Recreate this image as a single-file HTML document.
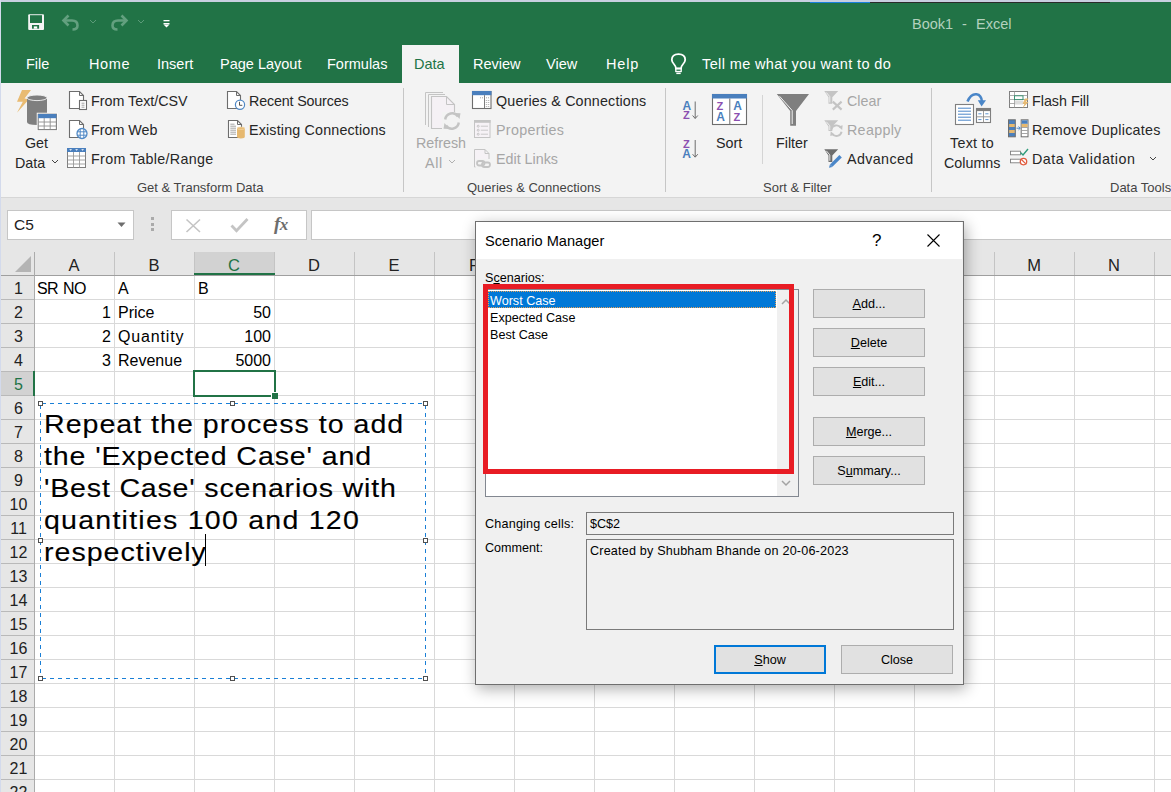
<!DOCTYPE html>
<html><head><meta charset="utf-8">
<style>
*{box-sizing:border-box;margin:0;padding:0}
html,body{width:1171px;height:792px;overflow:hidden;background:#fff;font-family:"Liberation Sans",sans-serif;}
body{position:relative}
.a{position:absolute;white-space:nowrap}
.t{position:absolute;white-space:nowrap;line-height:1}
#topstrip{left:0;top:0;width:1171px;height:2px;background:#c8cfe0}
#leftstrip{left:0;top:0;width:1px;height:792px;background:#d3daec}
#green{left:1px;top:2px;width:1170px;height:81px;background:#217346}
.tab{color:#fff;font-size:14.5px;top:57px}
#ribbon{left:1px;top:83px;width:1170px;height:114px;background:#f3f3f3}
.rb{color:#262626;font-size:14.3px}
.rbd{color:#a6a6a6;font-size:14.3px}
.grp{color:#444;font-size:13px;top:181px}
.sep{position:absolute;width:1px;background:#d4d4d4}
#fbar{left:1px;top:197px;width:1170px;height:55px;background:#e6e6e6;border-top:1px solid #d6d6d6}
#colhdr{left:1px;top:252px;width:1170px;height:24px;background:#e6e6e6;border-bottom:1px solid #9f9f9f}
#rowhdr{left:1px;top:276px;width:34px;height:516px;background:#e6e6e6;border-right:1px solid #9f9f9f}
#cells{left:35px;top:276px;width:1136px;height:516px;
 background-image:repeating-linear-gradient(to right,transparent 0,transparent 79px,#d9d9d9 79px,#d9d9d9 80px),
 repeating-linear-gradient(to bottom,transparent 0,transparent 23px,#d9d9d9 23px,#d9d9d9 24px);}
.ch{font-size:16.5px;color:#222;top:257px;text-align:center;width:80px}
.rh{font-size:16px;color:#222;left:2px;width:33px;text-align:center}
.cell{font-size:16px;color:#000}
.dl{font-size:12.6px;color:#000}
.btn{left:813px;width:112px;height:29px;background:#e1e1e1;border:1px solid #adadad}
.tb{font-size:26px;color:#000;letter-spacing:0.9px;transform:scaleX(1.1);transform-origin:0 0;-webkit-text-stroke:0.12px #000}
</style></head><body>
<div class="a" id="topstrip"></div>
<div class="a" id="green"></div>
<div class="a" style="left:810px;top:2px;width:60px;height:1px;background:#1a7fdc"></div>
<div class="a" style="left:870px;top:2px;width:240px;height:1px;background:#2a2a2a"></div>
<div class="a" id="leftstrip"></div>

<!-- title -->
<div class="t" style="left:912px;top:17px;font-size:14.5px;color:#b3d1be">Book1</div><div class="t" style="left:962px;top:17px;font-size:14.5px;color:#b3d1be">-</div><div class="t" style="left:976px;top:17px;font-size:14.5px;color:#b3d1be">Excel</div>

<!-- tabs -->
<div class="t tab" style="left:26px">File</div>
<div class="t tab" style="letter-spacing:0.6px;left:89px">Home</div>
<div class="t tab" style="left:157px">Insert</div>
<div class="t tab" style="left:220px">Page Layout</div>
<div class="t tab" style="left:327px">Formulas</div>
<div class="a" style="left:402px;top:45px;width:57px;height:38px;background:#f3f3f3"></div>
<div class="t tab" style="left:414px;color:#217346">Data</div>
<div class="t tab" style="left:473px">Review</div>
<div class="t tab" style="left:546px">View</div>
<div class="t tab" style="letter-spacing:0.8px;left:606px">Help</div>
<div class="t tab" style="letter-spacing:0.38px;left:702px">Tell me what you want to do</div>

<!-- ribbon -->
<div class="a" id="ribbon"></div>
<div class="t rb" style="left:25px;top:136px">Get</div>
<div class="t rb" style="left:15px;top:156px">Data</div>
<div class="t rb" style="left:91px;top:94px">From Text/CSV</div>
<div class="t rb" style="left:91px;top:123px">From Web</div>
<div class="t rb" style="letter-spacing:0.32px;left:91px;top:152px">From Table/Range</div>
<div class="t rb" style="letter-spacing:-0.16px;left:249px;top:94px">Recent Sources</div>
<div class="t rb" style="letter-spacing:0.17px;left:249px;top:123px">Existing Connections</div>
<div class="t grp" style="left:137px">Get &amp; Transform Data</div>

<div class="t rbd" style="left:416px;top:136px">Refresh</div>
<div class="t rbd" style="letter-spacing:0.7px;left:425px;top:156px">All</div>
<div class="t rb" style="letter-spacing:0.16px;left:496px;top:94px">Queries &amp; Connections</div>
<div class="t rbd" style="letter-spacing:0.3px;left:496px;top:123px">Properties</div>
<div class="t rbd" style="left:496px;top:152px">Edit Links</div>
<div class="t grp" style="left:467px">Queries &amp; Connections</div>

<div class="t rb" style="left:716px;top:136px">Sort</div>
<div class="t rb" style="left:776px;top:136px">Filter</div>
<div class="t rbd" style="left:847px;top:94px">Clear</div>
<div class="t rbd" style="letter-spacing:0.3px;left:847px;top:123px">Reapply</div>
<div class="t rb" style="letter-spacing:0.37px;left:847px;top:152px">Advanced</div>
<div class="t grp" style="left:763px">Sort &amp; Filter</div>

<div class="t rb" style="letter-spacing:0.28px;left:950px;top:136px">Text to</div>
<div class="t rb" style="left:944px;top:156px">Columns</div>
<div class="t rb" style="left:1032px;top:94px">Flash Fill</div>
<div class="t rb" style="letter-spacing:0.28px;left:1032px;top:123px">Remove Duplicates</div>
<div class="t rb" style="letter-spacing:0.5px;left:1032px;top:152px">Data Validation</div>
<div class="t grp" style="left:1110px">Data Tools</div>

<div class="sep" style="left:403px;top:88px;height:104px;background:#c6c6c6"></div>
<div class="sep" style="left:665px;top:88px;height:104px;background:#c6c6c6"></div>
<div class="sep" style="left:931px;top:88px;height:104px;background:#c6c6c6"></div>

<!-- formula bar -->
<div class="a" id="fbar"></div>
<div class="a" style="left:7px;top:210px;width:127px;height:30px;background:#fff;border:1px solid #c6c6c6"></div>
<div class="t" style="left:14px;top:217px;font-size:15.5px;color:#222">C5</div>
<div class="a" style="left:171px;top:210px;width:136px;height:30px;background:#fff;border:1px solid #c6c6c6"></div>
<div class="a" style="left:311px;top:210px;width:870px;height:30px;background:#fff;border:1px solid #c6c6c6"></div>

<!-- QAT -->
<svg class="a" style="left:28px;top:14px" width="17" height="17"><path d="M0.2 1.2 Q0.2 0.2 1.2 0.2 H15 Q16 0.2 16 1.2 V14.9 Q16 15.9 15 15.9 H1.2 Q0.2 15.9 0.2 14.9 Z" fill="#f4f4f4"/><rect x="2" y="1.2" width="12" height="7.8" fill="#217346"/><rect x="4" y="11" width="7.1" height="3.7" fill="#217346"/><rect x="5.8" y="12.4" width="3.4" height="2.3" fill="#fff"/></svg>
<svg class="a" style="left:61px;top:14px" width="20" height="17"><path d="M3 6.5 H11 Q16.5 6.5 16.5 11.5 Q16.5 15.5 11.5 15.5" stroke="#63a07f" stroke-width="2.6" fill="none"/><path d="M7.5 1.5 L2.5 6.5 L7.5 11.5" stroke="#63a07f" stroke-width="2.6" fill="none"/></svg>
<svg class="a" style="left:89px;top:19px" width="8" height="5"><path d="M1 1 L4 4 L7 1" stroke="#5c9b79" stroke-width="1" fill="none"/></svg>
<svg class="a" style="left:109px;top:14px" width="20" height="17"><path d="M17 6.5 H9 Q3.5 6.5 3.5 11.5 Q3.5 15.5 8.5 15.5" stroke="#63a07f" stroke-width="2.6" fill="none"/><path d="M12.5 1.5 L17.5 6.5 L12.5 11.5" stroke="#63a07f" stroke-width="2.6" fill="none"/></svg>
<svg class="a" style="left:137px;top:19px" width="8" height="5"><path d="M1 1 L4 4 L7 1" stroke="#5c9b79" stroke-width="1" fill="none"/></svg>
<svg class="a" style="left:163px;top:19px" width="8" height="9"><rect x="0.5" y="1" width="6" height="1.3" fill="#fff"/><rect x="0.5" y="4" width="6" height="1.3" fill="#fff"/><path d="M0.5 5.5 H6.5 L3.5 8.5 Z" fill="#fff"/></svg>
<!-- bulb -->
<svg class="a" style="left:669px;top:52px" width="20" height="24"><path d="M7 16.5 Q7 14.5 5.2 12.5 Q2.8 10 2.8 7.8 Q2.8 2.2 9.5 2.2 Q16.2 2.2 16.2 7.8 Q16.2 10 13.8 12.5 Q12 14.5 12 16.5 Z" stroke="#fff" stroke-width="1.8" fill="none"/><rect x="6.8" y="16.5" width="5.4" height="3" stroke="#fff" stroke-width="1.3" fill="none"/><rect x="7.3" y="20.6" width="4.4" height="1.5" fill="#fff"/></svg>
<!-- Get data -->
<svg class="a" style="left:10px;top:85px" width="50" height="48">
<path d="M12 5 L21 5 L14.5 13.5 L19 14.2 L7 27.8 L12.8 16.8 L7 16.8 Z" fill="#e9bb72"/>
<path d="M17 12.8 V37 Q17 40 27 40 Q37 40 37 37 V12.8 Z" fill="#7f7f7f"/>
<ellipse cx="27" cy="12.8" rx="10" ry="2.8" fill="#7f7f7f" stroke="#f3f3f3" stroke-width="0.9"/>
<rect x="27.5" y="28.5" width="19.5" height="16.5" fill="#fff" stroke="#fff" stroke-width="1.5"/>
<rect x="28.2" y="29.2" width="18.2" height="15.4" fill="#fff" stroke="#7f7f7f" stroke-width="1.1"/>
<rect x="28.2" y="29" width="18.2" height="4.2" fill="#4a7fbd"/>
<path d="M34.2 33 V44.5 M40.2 33 V44.5 M28.5 37 H46 M28.5 41 H46" stroke="#8f8f8f" stroke-width="0.9"/>
</svg>
<!-- From Text/CSV -->
<svg class="a" style="left:64px;top:88px" width="28" height="82">
<path d="M5.5 3.5 H15.5 L19.5 7.5 V20.5 H5.5 Z" stroke="#6d6d6d" stroke-width="1.1" fill="#fff"/><path d="M15.5 3.5 V7.5 H19.5" stroke="#6d6d6d" stroke-width="1" fill="none"/>
<rect x="15.5" y="12.5" width="7" height="9" fill="#fff" stroke="#6d6d6d" stroke-width="1.1"/>
<path d="M17.5 15.2 H20.5 M17.5 17.2 H20.5 M17.5 19.2 H20.5" stroke="#7a7a7a" stroke-width="0.7"/>
<path d="M5.5 32.5 H15.5 L19.5 36.5 V49.5 H5.5 Z" stroke="#6d6d6d" stroke-width="1.1" fill="#fff"/><path d="M15.5 32.5 V36.5 H19.5" stroke="#6d6d6d" stroke-width="1" fill="none"/>
<circle cx="18" cy="45.5" r="5" fill="#fff" stroke="#5089c6" stroke-width="1.3"/>
<path d="M13.5 43.8 H22.5 M13.5 47.2 H22.5 M16.2 41 V50 M19.8 41 V50" stroke="#5089c6" stroke-width="1"/>
<rect x="3.5" y="60.5" width="18" height="19" fill="#fff" stroke="#7f7f7f" stroke-width="1"/>
<rect x="3" y="60" width="19" height="4" fill="#4a7fbd"/>
<path d="M9.5 64 V79.5 M15.5 64 V79.5 M3.5 68 H21.5 M3.5 72 H21.5 M3.5 76 H21.5" stroke="#9a9a9a" stroke-width="0.9"/>
<path d="M5.2 61.2 H8 L6.6 62.8 Z M11.2 61.2 H14 L12.6 62.8 Z M17.2 61.2 H20 L18.6 62.8 Z" fill="#fff"/>
</svg>
<!-- Recent sources / existing connections -->
<svg class="a" style="left:222px;top:88px" width="28" height="56">
<path d="M5.5 3.5 H14.5 L18.5 7.5 V20.5 H5.5 Z" stroke="#6d6d6d" stroke-width="1.1" fill="#fff"/><path d="M14.5 3.5 V7.5 H18.5" stroke="#6d6d6d" stroke-width="1" fill="none"/>
<circle cx="18" cy="16.7" r="4.6" fill="#fff" stroke="#4f88c6" stroke-width="1.2"/>
<path d="M17.5 13.8 V17.3 H20.3" stroke="#555" stroke-width="1" fill="none"/>
<path d="M6.5 32.5 H15.5 L19.5 36.5 V49.5 H6.5 Z" stroke="#6d6d6d" stroke-width="1.1" fill="#fff"/><path d="M15.5 32.5 V36.5 H19.5" stroke="#6d6d6d" stroke-width="1" fill="none"/>
<path d="M8.3 36.2 H12.5 M8.3 38.2 H14 M8.3 40.2 H14 M8.3 42.2 H14 M8.3 44.2 H14 M8.3 46.2 H14" stroke="#8f8f8f" stroke-width="0.8"/>
<path d="M15 40.2 V48.8 Q15 50.5 18.9 50.5 Q22.8 50.5 22.8 48.8 V40.2 Z" fill="#e6b86f"/>
<ellipse cx="18.9" cy="40.2" rx="3.9" ry="1.2" fill="#e6b86f" stroke="#f7e0bb" stroke-width="0.6"/>
</svg>
<!-- Refresh all -->
<svg class="a" style="left:410px;top:88px" width="85" height="84">
<path d="M15.5 37 V4.5 H33" stroke="#c4c4c4" stroke-width="1" fill="none"/>
<path d="M18.5 39 V6.5 H35" stroke="#c4c4c4" stroke-width="1" fill="none"/>
<path d="M21.5 40.5 V8.5 H36.5 L44.5 16.5 V40.5 Z" stroke="#c4c4c4" stroke-width="1.1" fill="#f5f1f5"/><path d="M36.5 8.5 V16.5 H44.5" stroke="#c4c4c4" stroke-width="1" fill="none"/><rect x="32" y="24" width="20" height="20" fill="#f3f3f3"/>
<path d="M35.2 31.5 A7 7 0 0 1 48 28.5" stroke="#c4c4c4" stroke-width="2.4" fill="none"/>
<path d="M44.5 25 L50.5 25.2 L49.5 31 Z" fill="#c4c4c4"/>
<path d="M48.8 34.5 A7 7 0 0 1 36 37.5" stroke="#c4c4c4" stroke-width="2.4" fill="none"/>
<path d="M39.5 41 L33.5 40.8 L34.5 35 Z" fill="#c4c4c4"/>
<!-- queries & connections -->
<rect x="62.5" y="3.5" width="18.5" height="17" fill="#fff" stroke="#6d6d6d" stroke-width="1.1"/>
<rect x="62" y="3" width="19.5" height="4.2" fill="#4a7fbd"/>
<path d="M74.5 7.2 V20.5" stroke="#6d6d6d" stroke-width="0.9"/>
<path d="M70 9.8 H80 M75.8 12.5 H80 M75.8 14.5 H80 M75.8 16.5 H80 M75.8 18.5 H80" stroke="#8f8f8f" stroke-width="0.8" stroke-dasharray="1 1"/>
<!-- properties -->
<rect x="64.5" y="32.5" width="15.5" height="17" fill="#f6f2f6" stroke="#c4c4c4" stroke-width="1"/>
<rect x="64" y="32" width="16.5" height="2.8" fill="#c4c4c4"/>
<circle cx="68.2" cy="38.2" r="1" fill="none" stroke="#bbb" stroke-width="0.8"/><circle cx="68.2" cy="42.2" r="1" fill="none" stroke="#bbb" stroke-width="0.8"/><circle cx="68.2" cy="46.2" r="1" fill="none" stroke="#bbb" stroke-width="0.8"/>
<path d="M70.8 38.2 H78 M70.8 42.2 H78 M70.8 46.2 H78" stroke="#c4c4c4" stroke-width="0.9"/>
<!-- edit links -->
<path d="M64.5 79 V61.5 H75 L79 65.5 V79 Z" stroke="#c4c4c4" stroke-width="1" fill="#f6f2f6"/><path d="M75 61.5 V65.5 H79" stroke="#c4c4c4" stroke-width="1" fill="none"/><rect x="65.5" y="71" width="16" height="10" fill="#f3f3f3"/>
<rect x="67" y="73" width="7.5" height="4.5" rx="2.2" fill="none" stroke="#c4c4c4" stroke-width="1.8"/>
<rect x="72" y="74.5" width="8" height="4.5" rx="2.2" fill="none" stroke="#c4c4c4" stroke-width="1.8"/>
</svg>
<!-- Sort -->
<svg class="a" style="left:675px;top:88px" width="85" height="84">
<text x="7.6" y="22" font-family="Liberation Sans" font-weight="bold" font-size="12" fill="#4a7fbd">A</text>
<text x="8" y="31" font-family="Liberation Sans" font-weight="bold" font-size="11" fill="#8b4fb0">Z</text>
<path d="M20.2 13.5 V30.3 M17.6 27.5 L20.2 30.5 L22.8 27.5" stroke="#6d6d6d" stroke-width="1" fill="none"/>
<text x="8" y="59.6" font-family="Liberation Sans" font-weight="bold" font-size="11" fill="#8b4fb0">Z</text>
<text x="7.3" y="70" font-family="Liberation Sans" font-weight="bold" font-size="12" fill="#4a7fbd">A</text>
<path d="M20.2 52 V69 M17.6 66.2 L20.2 69.2 L22.8 66.2" stroke="#6d6d6d" stroke-width="1" fill="none"/>
<rect x="37.5" y="6.5" width="34" height="30" fill="#fff" stroke="#6d6d6d" stroke-width="1.1"/>
<rect x="37" y="6" width="35" height="4.5" fill="#4a7fbd"/>
<path d="M54.8 10.5 V36.5" stroke="#6d6d6d" stroke-width="1"/>
<text x="41.6" y="21.5" font-family="Liberation Sans" font-weight="bold" font-size="11" fill="#8b4fb0">Z</text>
<text x="41.2" y="32.5" font-family="Liberation Sans" font-weight="bold" font-size="12" fill="#4a7fbd">A</text>
<text x="58.2" y="21.5" font-family="Liberation Sans" font-weight="bold" font-size="12" fill="#4a7fbd">A</text>
<text x="58.6" y="32.5" font-family="Liberation Sans" font-weight="bold" font-size="11" fill="#8b4fb0">Z</text>
</svg>
<div class="a" style="left:762px;top:95px;width:1px;height:69px;background:#d4d4d4"></div>
<!-- Filter group -->
<svg class="a" style="left:765px;top:88px" width="85" height="84">
<path d="M11.8 6 H44 L31 23 V37.8 H25.2 V23 Z" fill="#7f7f7f"/>
<path d="M14.5 8.2 L27.2 22.5 V36" stroke="#fff" stroke-width="0.9" fill="none"/>
<path d="M59.3 3 H73.2 L67.3 9.2 V15.8 H63.5 V9.2 Z" fill="#c4c4c4"/>
<path d="M61.3 4.5 L64.8 8.6 V14.5" stroke="#f3f3f3" stroke-width="0.9" fill="none"/>
<path d="M67.8 13.6 L76.6 21.6 M76.6 13.6 L67.8 21.6" stroke="#c4c4c4" stroke-width="2.1"/>
<path d="M59.3 32.2 H73.2 L67.3 38.4 V43 H63.5 V38.4 Z" fill="#c4c4c4"/>
<path d="M61.3 33.7 L64.8 37.8 V42" stroke="#f3f3f3" stroke-width="0.9" fill="none"/>
<rect x="64.5" y="35.5" width="14" height="14" fill="#f3f3f3" opacity="0"/>
<path d="M66.3 41.5 A5.3 5.3 0 0 1 75.8 39.6" stroke="#c4c4c4" stroke-width="1.9" fill="none"/>
<path d="M76.6 43.8 A5.3 5.3 0 0 1 67.1 45.7" stroke="#c4c4c4" stroke-width="1.9" fill="none"/>
<path d="M73.2 38.6 L77.6 37.2 L77.2 42 Z" fill="#c4c4c4"/>
<path d="M69.7 46.7 L65.3 48.1 L65.7 43.3 Z" fill="#c4c4c4"/>
<path d="M59.3 61.3 H73.2 L67.3 67.5 V74 H63.5 V67.5 Z" fill="#6d6d6d"/>
<path d="M61.3 62.8 L64.8 66.9 V72.8" stroke="#f3f3f3" stroke-width="0.9" fill="none"/>
<path d="M66.2 77.6 L75.6 68.2" stroke="#4a86c8" stroke-width="3.4"/>
<path d="M64 79.8 L64.9 76.4 L67.4 78.9 Z" fill="#4a86c8"/>
</svg>
<!-- Text to columns etc -->
<svg class="a" style="left:940px;top:88px" width="95" height="84">
<rect x="15.5" y="16.5" width="18" height="20" fill="#fff" stroke="#7f7f7f" stroke-width="1.1"/>
<path d="M18 20.2 H31 M18 23.2 H31 M18 26.2 H31 M18 29.2 H31 M18 32.2 H31" stroke="#4a86c8" stroke-width="1"/>
<rect x="36.5" y="20.5" width="14" height="14" fill="#fff" stroke="#7f7f7f" stroke-width="1.1"/>
<rect x="36.5" y="20.5" width="14" height="2.6" fill="#7f7f7f"/>
<path d="M43.5 23 V34.5 M36.5 28.8 H50.5" stroke="#8f8f8f" stroke-width="0.9"/>
<path d="M38.3 25.8 H41.5 M45.3 25.8 H48.5 M38.3 31.6 H41.5 M45.3 31.6 H48.5" stroke="#4a86c8" stroke-width="0.9"/>
<path d="M27.5 13.5 Q31 5.5 36.5 6.3 Q41.5 7 42 14" stroke="#4a86c8" stroke-width="2.6" fill="none"/>
<path d="M37.8 12.3 L46 12.3 L41.6 18.6 Z" fill="#4a86c8"/>
<!-- flash fill -->
<rect x="69.5" y="3.5" width="18" height="16" fill="#fff" stroke="#7f7f7f" stroke-width="1"/>
<path d="M69.5 7.5 H87.5 M69.5 11.5 H87.5 M69.5 15.5 H87.5 M74.5 3.5 V19.5" stroke="#9a9a9a" stroke-width="0.8"/>
<rect x="74.5" y="7.8" width="8.5" height="3.8" fill="#fff" stroke="#2e8b6a" stroke-width="0.9"/>
<rect x="75" y="12.5" width="8" height="4" fill="#dcdcdc"/>
<path d="M85 10.5 L88.5 10.5 L86 14 L88.5 14 L82.5 20.3 L84.5 15.8 L82.5 15.8 Z" fill="#e9bb72"/>
<!-- remove duplicates -->
<rect x="68.5" y="31.8" width="6.8" height="17" fill="#4a7fbd" stroke="#6d6d6d" stroke-width="1"/>
<rect x="69.2" y="36" width="5.5" height="3" fill="#e6b86f"/><rect x="69.2" y="42" width="5.5" height="3" fill="#e6b86f"/>
<rect x="81.2" y="31.8" width="6.8" height="17" fill="#fff" stroke="#6d6d6d" stroke-width="1"/>
<rect x="81.7" y="32.3" width="5.8" height="3.5" fill="#4a7fbd"/><rect x="81.7" y="36" width="5.8" height="3" fill="#e6b86f"/>
<path d="M81.5 39.5 H87.5 M81.5 42.5 H87.5 M81.5 45.5 H87.5" stroke="#8f8f8f" stroke-width="0.8"/>
<path d="M76.5 40.2 H80 M78.5 38.5 L80.3 40.2 L78.5 41.9" stroke="#4a86c8" stroke-width="1" fill="none"/>
<!-- data validation -->
<rect x="70.5" y="63.2" width="10" height="3.6" fill="#fff" stroke="#7f7f7f" stroke-width="0.9"/>
<rect x="70.5" y="71.2" width="10" height="3.6" fill="#fff" stroke="#7f7f7f" stroke-width="0.9"/>
<path d="M80.5 64.5 L83 67 L88 61" stroke="#2e9b7a" stroke-width="1.4" fill="none"/>
<circle cx="83.5" cy="73.6" r="3.2" fill="#fff" stroke="#e05a3c" stroke-width="1.3"/>
<path d="M81.4 71.5 L85.6 75.7" stroke="#e05a3c" stroke-width="1.2"/>
</svg>
<!-- dropdown arrows in ribbon -->
<svg class="a" style="left:51px;top:159px" width="8" height="5"><path d="M1 1 L4 4 L7 1" stroke="#444" stroke-width="1" fill="none"/></svg>
<svg class="a" style="left:448px;top:159px" width="8" height="5"><path d="M1 1 L4 4 L7 1" stroke="#b0b0b0" stroke-width="1" fill="none"/></svg>
<svg class="a" style="left:1149px;top:156px" width="8" height="5"><path d="M1 1 L4 4 L7 1" stroke="#444" stroke-width="1" fill="none"/></svg>
<!-- formula bar icons -->
<svg class="a" style="left:117px;top:222px" width="10" height="6"><path d="M0.5 0.5 H8.5 L4.5 5 Z" fill="#6d6d6d"/></svg>
<div class="a" style="left:151px;top:217px;width:3px;height:3px;background:#aaa"></div>
<div class="a" style="left:151px;top:223px;width:3px;height:3px;background:#aaa"></div>
<div class="a" style="left:151px;top:228px;width:3px;height:3px;background:#aaa"></div>
<svg class="a" style="left:185px;top:218px" width="17" height="15"><path d="M1.5 1.5 L15 14 M15 1.5 L1.5 14" stroke="#c4c4c4" stroke-width="1.6"/></svg>
<svg class="a" style="left:230px;top:217px" width="19" height="16"><path d="M1.5 8.5 L6.5 13.8 L17.5 2" stroke="#c4c4c4" stroke-width="2.8" fill="none"/></svg>
<div class="t" style="left:274px;top:214px;font-family:'Liberation Serif',serif;font-style:italic;font-weight:bold;font-size:19px;color:#6d6d6d;letter-spacing:-0.5px">f<span style="font-size:17px">x</span></div>
<!-- grid -->
<div class="a" id="colhdr"></div>
<div class="a" id="rowhdr"></div>
<div class="a" id="cells"></div>
<div class="a" style="left:114px;top:252px;width:1px;height:23px;background:#c4c4c4"></div>
<div class="a" style="left:194px;top:252px;width:1px;height:23px;background:#c4c4c4"></div>
<div class="a" style="left:274px;top:252px;width:1px;height:23px;background:#c4c4c4"></div>
<div class="a" style="left:354px;top:252px;width:1px;height:23px;background:#c4c4c4"></div>
<div class="a" style="left:434px;top:252px;width:1px;height:23px;background:#c4c4c4"></div>
<div class="a" style="left:514px;top:252px;width:1px;height:23px;background:#c4c4c4"></div>
<div class="a" style="left:594px;top:252px;width:1px;height:23px;background:#c4c4c4"></div>
<div class="a" style="left:674px;top:252px;width:1px;height:23px;background:#c4c4c4"></div>
<div class="a" style="left:754px;top:252px;width:1px;height:23px;background:#c4c4c4"></div>
<div class="a" style="left:834px;top:252px;width:1px;height:23px;background:#c4c4c4"></div>
<div class="a" style="left:914px;top:252px;width:1px;height:23px;background:#c4c4c4"></div>
<div class="a" style="left:994px;top:252px;width:1px;height:23px;background:#c4c4c4"></div>
<div class="a" style="left:1074px;top:252px;width:1px;height:23px;background:#c4c4c4"></div>
<div class="a" style="left:1154px;top:252px;width:1px;height:23px;background:#c4c4c4"></div>
<div class="a" style="left:34px;top:252px;width:1px;height:540px;background:#ababab"></div>
<svg class="a" style="left:0;top:252px" width="34" height="24"><polygon points="15,20 31,4 31,20" fill="#b4b4b4"/></svg>
<div class="a" style="left:1px;top:299px;width:33px;height:1px;background:#b9b9b9"></div>
<div class="a" style="left:1px;top:323px;width:33px;height:1px;background:#b9b9b9"></div>
<div class="a" style="left:1px;top:347px;width:33px;height:1px;background:#b9b9b9"></div>
<div class="a" style="left:1px;top:371px;width:33px;height:1px;background:#b9b9b9"></div>
<div class="a" style="left:1px;top:395px;width:33px;height:1px;background:#b9b9b9"></div>
<div class="a" style="left:1px;top:419px;width:33px;height:1px;background:#b9b9b9"></div>
<div class="a" style="left:1px;top:443px;width:33px;height:1px;background:#b9b9b9"></div>
<div class="a" style="left:1px;top:467px;width:33px;height:1px;background:#b9b9b9"></div>
<div class="a" style="left:1px;top:491px;width:33px;height:1px;background:#b9b9b9"></div>
<div class="a" style="left:1px;top:515px;width:33px;height:1px;background:#b9b9b9"></div>
<div class="a" style="left:1px;top:539px;width:33px;height:1px;background:#b9b9b9"></div>
<div class="a" style="left:1px;top:563px;width:33px;height:1px;background:#b9b9b9"></div>
<div class="a" style="left:1px;top:587px;width:33px;height:1px;background:#b9b9b9"></div>
<div class="a" style="left:1px;top:611px;width:33px;height:1px;background:#b9b9b9"></div>
<div class="a" style="left:1px;top:635px;width:33px;height:1px;background:#b9b9b9"></div>
<div class="a" style="left:1px;top:659px;width:33px;height:1px;background:#b9b9b9"></div>
<div class="a" style="left:1px;top:683px;width:33px;height:1px;background:#b9b9b9"></div>
<div class="a" style="left:1px;top:707px;width:33px;height:1px;background:#b9b9b9"></div>
<div class="a" style="left:1px;top:731px;width:33px;height:1px;background:#b9b9b9"></div>
<div class="a" style="left:1px;top:755px;width:33px;height:1px;background:#b9b9b9"></div>
<div class="a" style="left:1px;top:779px;width:33px;height:1px;background:#b9b9b9"></div>
<div class="a" style="left:195px;top:252px;width:79px;height:23px;background:#d2d2d2"></div>
<div class="a" style="left:194px;top:273px;width:81px;height:2px;background:#217346"></div>
<div class="a" style="left:1px;top:372px;width:33px;height:23px;background:#d2d2d2"></div>
<div class="a" style="left:33px;top:371px;width:2px;height:25px;background:#217346"></div>
<div class="t ch" style="left:34px;color:#222">A</div>
<div class="t ch" style="left:114px;color:#222">B</div>
<div class="t ch" style="left:194px;color:#217346">C</div>
<div class="t ch" style="left:274px;color:#222">D</div>
<div class="t ch" style="left:354px;color:#222">E</div>
<div class="t ch" style="left:434px;color:#222">F</div>
<div class="t ch" style="left:994px;color:#222">M</div>
<div class="t ch" style="left:1074px;color:#222">N</div>
<div class="t rh" style="top:281px;color:#222">1</div>
<div class="t rh" style="top:305px;color:#222">2</div>
<div class="t rh" style="top:329px;color:#222">3</div>
<div class="t rh" style="top:353px;color:#222">4</div>
<div class="t rh" style="top:377px;color:#217346">5</div>
<div class="t rh" style="top:401px;color:#222">6</div>
<div class="t rh" style="top:425px;color:#222">7</div>
<div class="t rh" style="top:449px;color:#222">8</div>
<div class="t rh" style="top:473px;color:#222">9</div>
<div class="t rh" style="top:497px;color:#222">10</div>
<div class="t rh" style="top:521px;color:#222">11</div>
<div class="t rh" style="top:545px;color:#222">12</div>
<div class="t rh" style="top:569px;color:#222">13</div>
<div class="t rh" style="top:593px;color:#222">14</div>
<div class="t rh" style="top:617px;color:#222">15</div>
<div class="t rh" style="top:641px;color:#222">16</div>
<div class="t rh" style="top:665px;color:#222">17</div>
<div class="t rh" style="top:689px;color:#222">18</div>
<div class="t rh" style="top:713px;color:#222">19</div>
<div class="t rh" style="top:737px;color:#222">20</div>
<div class="t rh" style="top:761px;color:#222">21</div>
<div class="t rh" style="top:785px;color:#222">22</div>
<div class="t cell" style="left:37px;top:281px;letter-spacing:-0.6px;word-spacing:1.2px">SR NO</div>
<div class="t cell" style="left:118px;top:281px">A</div>
<div class="t cell" style="left:198px;top:281px">B</div>
<div class="t cell" style="left:34px;width:77px;text-align:right;top:305px">1</div>
<div class="t cell" style="left:118px;top:305px">Price</div>
<div class="t cell" style="left:194px;width:77px;text-align:right;top:305px">50</div>
<div class="t cell" style="left:34px;width:77px;text-align:right;top:329px">2</div>
<div class="t cell" style="left:118px;top:329px;letter-spacing:0.85px">Quantity</div>
<div class="t cell" style="left:194px;width:77px;text-align:right;top:329px">100</div>
<div class="t cell" style="left:34px;width:77px;text-align:right;top:353px">3</div>
<div class="t cell" style="left:118px;top:353px">Revenue</div>
<div class="t cell" style="left:194px;width:77px;text-align:right;top:353px">5000</div>
<div class="a" style="left:193px;top:370px;width:83px;height:27px;border:2px solid #217346"></div>
<div class="a" style="left:271px;top:392px;width:7px;height:7px;background:#217346;border-left:1px solid #fff;border-top:1px solid #fff"></div>
<div class="a" style="left:42px;top:403px;width:383px;height:1px;background:repeating-linear-gradient(to right,#1a7fd6 0,#1a7fd6 4px,transparent 4px,transparent 8px)"></div>
<div class="a" style="left:42px;top:678px;width:383px;height:1px;background:repeating-linear-gradient(to right,#1a7fd6 0,#1a7fd6 4px,transparent 4px,transparent 8px)"></div>
<div class="a" style="left:40px;top:405px;width:1px;height:273px;background:repeating-linear-gradient(to bottom,#1a7fd6 0,#1a7fd6 4px,transparent 4px,transparent 8px)"></div>
<div class="a" style="left:425px;top:405px;width:1px;height:273px;background:repeating-linear-gradient(to bottom,#1a7fd6 0,#1a7fd6 4px,transparent 4px,transparent 8px)"></div>
<div class="a" style="left:38px;top:401px;width:5px;height:5px;border:1px solid #505050;background:#fff"></div>
<div class="a" style="left:230px;top:401px;width:5px;height:5px;border:1px solid #505050;background:#fff"></div>
<div class="a" style="left:423px;top:401px;width:5px;height:5px;border:1px solid #505050;background:#fff"></div>
<div class="a" style="left:38px;top:538px;width:5px;height:5px;border:1px solid #505050;background:#fff"></div>
<div class="a" style="left:423px;top:538px;width:5px;height:5px;border:1px solid #505050;background:#fff"></div>
<div class="a" style="left:38px;top:676px;width:5px;height:5px;border:1px solid #505050;background:#fff"></div>
<div class="a" style="left:230px;top:676px;width:5px;height:5px;border:1px solid #505050;background:#fff"></div>
<div class="a" style="left:423px;top:676px;width:5px;height:5px;border:1px solid #505050;background:#fff"></div>
<div class="t tb" style="left:44px;top:411px;letter-spacing:0.9px">Repeat the process to add</div>
<div class="t tb" style="left:44px;top:443px;letter-spacing:0.78px">the &#39;Expected Case&#39; and</div>
<div class="t tb" style="left:44px;top:475px;letter-spacing:0.72px">&#39;Best Case&#39; scenarios with</div>
<div class="t tb" style="left:44px;top:507px;letter-spacing:1.1px">quantities 100 and 120</div>
<div class="t tb" style="left:44px;top:539px;letter-spacing:0.9px">respectively</div>
<div class="a" style="left:205px;top:534px;width:1px;height:32px;background:#000"></div><!-- dialog -->
<div class="a" style="left:475px;top:221px;width:489px;height:464px;background:#f0f0f0;border:1px solid #6f6f6f;box-shadow:2px 4px 14px rgba(0,0,0,0.32)"></div>
<div class="a" style="left:476px;top:222px;width:486px;height:37px;background:#fff"></div>
<div class="t dl" style="left:485px;top:234px;font-size:14.6px;color:#000">Scenario Manager</div>
<div class="t dl" style="left:872px;top:232px;font-size:17px;color:#000">?</div>
<svg class="a" style="left:926.5px;top:233.5px" width="13" height="13"><path d="M0.5 0.5 L12.5 12.5 M12.5 0.5 L0.5 12.5" stroke="#000" stroke-width="1.1" fill="none"/></svg>
<div class="t dl" style="left:485px;top:272px">S<u>c</u>enarios:</div>
<!-- listbox -->
<div class="a" style="left:485px;top:289px;width:314px;height:208px;background:#fff;border:1px solid #828790"></div>
<div class="a" style="left:777px;top:290px;width:21px;height:206px;background:#f0f0f0"></div>
<svg class="a" style="left:781px;top:297px" width="10" height="8"><path d="M1 7 L5 3 L9 7" stroke="#a3a3a3" stroke-width="1.5" fill="none"/></svg>
<svg class="a" style="left:781px;top:480px" width="10" height="8"><path d="M1 1 L5 5 L9 1" stroke="#a3a3a3" stroke-width="1.5" fill="none"/></svg>
<div class="a" style="left:488px;top:291px;width:288px;height:17px;background:#0078d7;border:1px dotted #e2a05a"></div>
<div class="t dl" style="left:490px;top:295px;color:#fff">Worst Case</div>
<div class="t dl" style="left:490px;top:312px">Expected Case</div>
<div class="t dl" style="left:490px;top:329px">Best Case</div>
<!-- red rect -->
<div class="a" style="left:483px;top:284px;width:311px;height:190px;border:5px solid #e81c24"></div>
<!-- buttons -->
<div class="a btn" style="top:289px"></div><div class="t dl" style="left:813px;width:112px;text-align:center;top:298px"><u>A</u>dd...</div>
<div class="a btn" style="top:328px"></div><div class="t dl" style="left:813px;width:112px;text-align:center;top:337px"><u>D</u>elete</div>
<div class="a btn" style="top:367px"></div><div class="t dl" style="left:813px;width:112px;text-align:center;top:376px"><u>E</u>dit...</div>
<div class="a btn" style="top:417px"></div><div class="t dl" style="left:813px;width:112px;text-align:center;top:426px"><u>M</u>erge...</div>
<div class="a btn" style="top:456px"></div><div class="t dl" style="left:813px;width:112px;text-align:center;top:465px">S<u>u</u>mmary...</div>
<!-- fields -->
<div class="t dl" style="left:485px;top:518px;letter-spacing:0.2px">Changing cells:</div>
<div class="a" style="left:586px;top:512px;width:368px;height:23px;background:#f0f0f0;border:1px solid #7a7a7a"></div>
<div class="t dl" style="left:590px;top:518px">$C$2</div>
<div class="t dl" style="left:485px;top:542px">Comment:</div>
<div class="a" style="left:586px;top:539px;width:368px;height:91px;background:#f0f0f0;border:1px solid #7a7a7a"></div>
<div class="t dl" style="left:590px;top:545px;letter-spacing:0.19px">Created by Shubham Bhande on 20-06-2023</div>
<div class="a" style="left:714px;top:645px;width:112px;height:29px;background:#e1e1e1;border:2px solid #0078d7"></div>
<div class="t dl" style="left:714px;width:112px;text-align:center;top:654px"><u>S</u>how</div>
<div class="a" style="left:841px;top:645px;width:112px;height:29px;background:#e1e1e1;border:1px solid #adadad"></div>
<div class="t dl" style="left:841px;width:112px;text-align:center;top:654px">Close</div>
</body></html>
